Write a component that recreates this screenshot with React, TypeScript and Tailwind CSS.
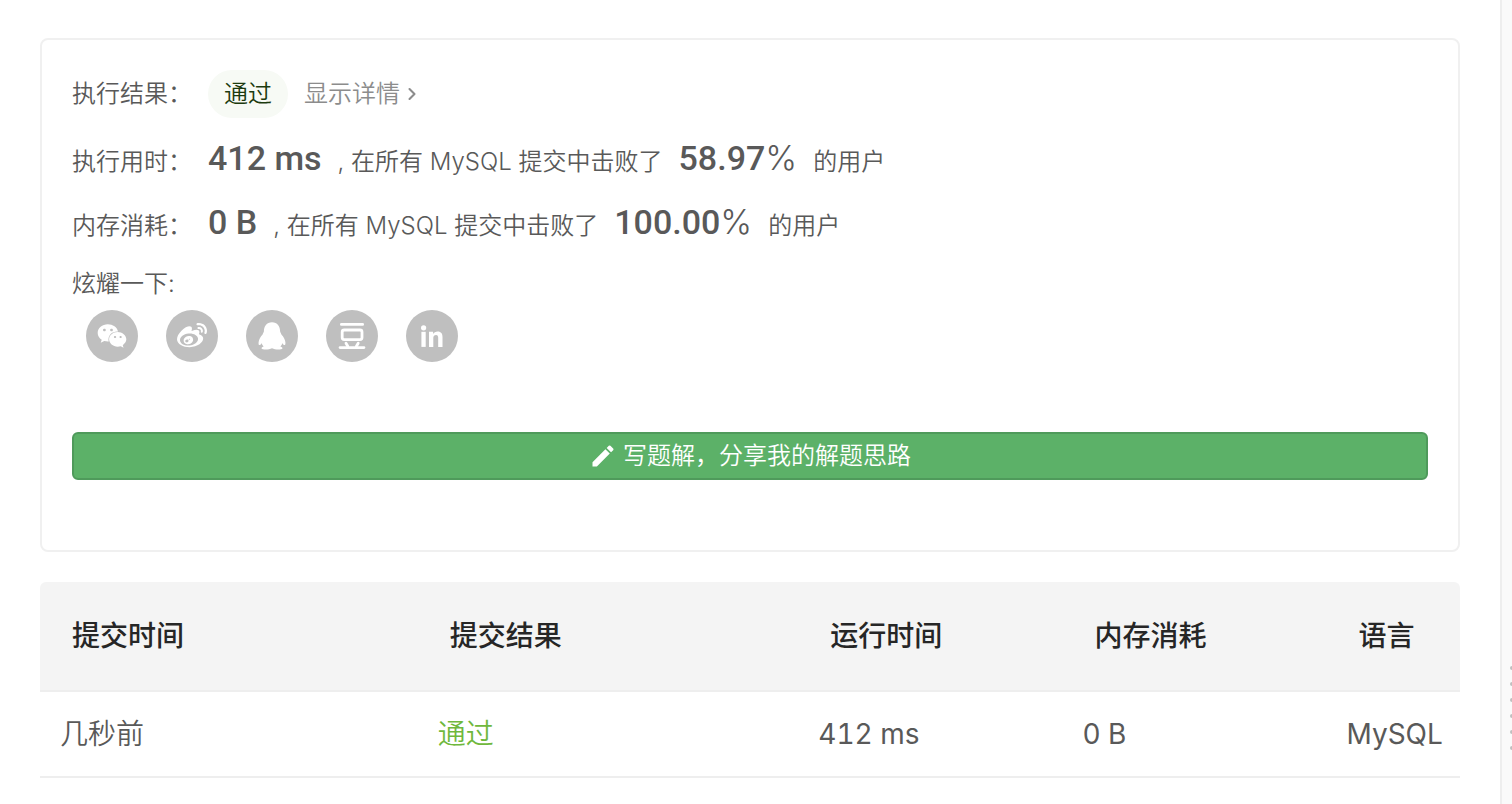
import type { ReactNode } from "react";
import { FaWeibo, FaWeixin } from "react-icons/fa";
import { MdEdit } from "react-icons/md";
import { LuChevronRight } from "react-icons/lu";

function QqIcon() {
  return (
    <svg viewBox="0 0 52 52" className="size-[52px]" fill="currentColor" aria-hidden="true">
      <path d="M26 12.2C20.6 12.2 18 16.4 17.9 21.2C17.9 22.4 16.8 23.2 16.6 24.6C14.4 27 12.9 29.8 12.6 32.2C12.4 34.2 12.9 35.3 13.6 35.1C14.4 34.9 15 34 15.6 33.2C16 34.6 16.7 35.7 17.6 36.4C15.9 36.9 15.3 37.6 15.6 38.4C16.2 39.7 22.6 39.9 26 38.2C29.4 39.9 35.8 39.7 36.4 38.4C36.7 37.6 36.1 36.9 34.4 36.4C35.3 35.7 36 34.6 36.4 33.2C37 34 37.6 34.9 38.4 35.1C39.1 35.3 39.6 34.2 39.4 32.2C39.1 29.8 37.6 27 35.4 24.6C35.2 23.2 34.1 22.4 34.1 21.2C34 16.4 31.4 12.2 26 12.2Z" />
    </svg>
  );
}

function DoubanIcon() {
  return (
    <svg viewBox="0 0 52 52" className="size-[52px]" fill="none" stroke="currentColor" strokeLinecap="round" aria-hidden="true">
      <path d="M15.3 14.4h21.4" strokeWidth="2.6" />
      <rect x="16.2" y="20" width="19.8" height="9.6" rx="2" strokeWidth="2.8" />
      <path d="M20 33.2l1.8 3M32.2 33.2l-1.8 3" strokeWidth="2.8" />
      <path d="M14 37.6h24" strokeWidth="2.6" />
    </svg>
  );
}

function LinkedinIcon() {
  return (
    <svg viewBox="0 0 52 52" className="size-[52px]" fill="currentColor" aria-hidden="true">
      <circle cx="17.6" cy="17.8" r="2.6" />
      <path d="M15.4 21.8h4.3v15.1h-4.3z" />
      <path d="M23 21.8h4.1v2.1c.9-1.5 2.5-2.5 4.6-2.5 3.4 0 4.8 2.2 4.8 5.6v9.9h-4.3v-9.1c0-1.9-.6-2.9-2.1-2.9-1.8 0-2.8 1.2-2.8 3.1v8.9H23z" />
    </svg>
  );
}

const shares: { name: string; icon: ReactNode }[] = [
  { name: "微信", icon: <FaWeixin className="size-[30px]" /> },
  { name: "微博", icon: <FaWeibo className="size-[30px]" /> },
  { name: "QQ", icon: <QqIcon /> },
  { name: "豆瓣", icon: <DoubanIcon /> },
  { name: "领英", icon: <LinkedinIcon /> },
];

const columns = [
  { title: "提交时间", width: "w-[26.6%]" },
  { title: "提交结果", width: "w-[26.8%]" },
  { title: "运行时间", width: "w-[18.6%]" },
  { title: "内存消耗", width: "w-[18.6%]" },
  { title: "语言", width: "w-auto" },
];

function Figure({ children }: { children: ReactNode }) {
  return <span className="mr-4 font-[Roboto] text-[34px] font-medium">{children}</span>;
}

function Stat({ label, value, percent }: { label: string; value: string; percent: string }) {
  return (
    <div className="flex h-16 items-baseline whitespace-pre leading-[64px]">
      <span className="mr-4">{label}：</span>
      <Figure>{value}</Figure>
      <span className="mr-4">, 在所有 MySQL 提交中击败了</span>
      <Figure>
        {percent}
        <span className="font-[Inter] font-light">%</span>
      </Figure>
      <span>的用户</span>
    </div>
  );
}

export default function App() {
  return (
    <div className="flex min-h-screen bg-white font-['Inter','Noto_Sans_CJK_SC',sans-serif] text-2xl font-[350] text-[#595959]">
      <main className="min-w-0 flex-1 px-10 pt-[38px]">
        <section className="rounded-lg border-2 border-[#f0f0f0] px-[30px] pt-[30px] pb-[70px]">
          <div className="flex h-12 items-center">
            <span className="mr-4">执行结果：</span>
            <span className="mr-4 rounded-full bg-[#f7faf5] px-4 leading-[48px] text-[#1c3a0e]">通过</span>
            <a href="#detail" className="flex items-center text-[#8c8c8c]">
              显示详情
              <LuChevronRight className="ml-0.5 size-5 stroke-[2.5]" />
            </a>
          </div>
          <div className="mt-2">
            <Stat label="执行用时" value="412 ms" percent="58.97" />
            <Stat label="内存消耗" value="0 B" percent="100.00" />
          </div>
          <p className="mt-3 leading-9">炫耀一下:</p>
          <div className="mt-2 flex gap-7 px-3.5">
            {shares.map((s) => (
              <button
                key={s.name}
                type="button"
                aria-label={s.name}
                className="flex size-[52px] items-center justify-center rounded-full bg-[#bfbfbf] text-white"
              >
                {s.icon}
              </button>
            ))}
          </div>
          <button
            type="button"
            className="mt-[70px] flex h-12 w-full items-center justify-center gap-1.5 rounded-md border-2 border-[#4f9a5b] bg-[#5cb168] text-white"
          >
            <MdEdit className="size-7" />
            写题解，分享我的解题思路
          </button>
        </section>

        <table className="mt-[30px] w-full table-fixed border-separate border-spacing-0 text-left text-[28px] leading-10">
          <thead>
            <tr>
              {columns.map((c) => (
                <th
                  key={c.title}
                  className={`${c.width} h-[110px] border-b-2 border-[#eeeeee] bg-[#f4f4f4] pl-8 font-medium text-[#262626] first:rounded-tl-md last:rounded-tr-md`}
                >
                  {c.title}
                </th>
              ))}
            </tr>
          </thead>
          <tbody>
            <tr className="tabular-nums [&>td]:h-[86px] [&>td]:border-b-2 [&>td]:border-[#eeeeee] [&>td]:pl-5">
              <td>几秒前</td>
              <td>
                <a href="#submission" className="text-[#6fb83c]">通过</a>
              </td>
              <td className="font-normal">412 ms</td>
              <td className="font-normal">0 B</td>
              <td className="font-normal">MySQL</td>
            </tr>
          </tbody>
        </table>
      </main>

      <div className="flex w-3 shrink-0 flex-col items-end overflow-hidden border-l-2 border-[#eeeeee] bg-[#fafafa] pt-[666px]">
        <div className="-mr-0.5 flex flex-col gap-3">
          {[0, 1, 2, 3, 4, 5].map((i) => (
            <span key={i} className="size-1 rounded-full bg-[#bfbfbf]" />
          ))}
        </div>
      </div>
    </div>
  );
}
